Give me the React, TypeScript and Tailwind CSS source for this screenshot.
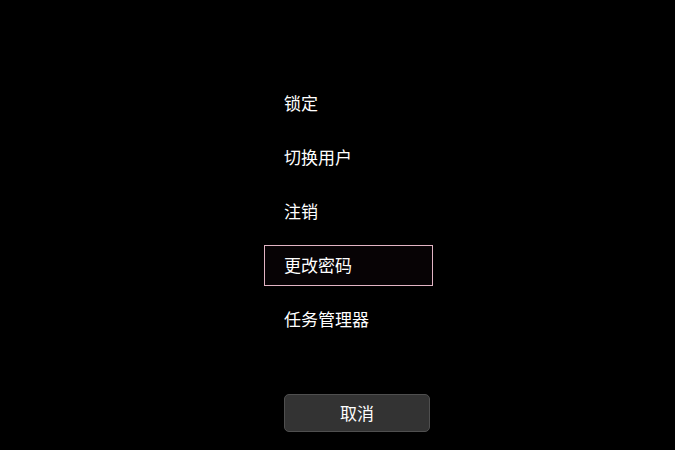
import React from "react";

const items = ["锁定", "切换用户", "注销", "更改密码", "任务管理器"];

export default function App() {
  return (
    <div
      className="w-[675px] h-[450px] bg-black text-white overflow-hidden"
      style={{ fontFamily: '"Noto Sans CJK SC", "Noto Sans", sans-serif' }}
    >
      <div className="flex flex-col pl-[264px] pt-[83px]">
        <div className="flex flex-col gap-[13px]">
          {items.map((t, i) => (
            <div
              key={t}
              className={
                i === 3
                  ? "w-[169px] h-[41px] flex items-center pl-[19px] pb-[2px] border border-[#e2b4c4] bg-[#070305] text-[17px] leading-none"
                  : "w-[169px] h-[41px] flex items-center pl-[20px] pb-[2px] text-[17px] leading-none"
              }
            >
              {t}
            </div>
          ))}
        </div>
        <div className="pl-[20px] pt-[54px]">
          <button className="w-[146px] h-[38px] rounded-[5px] bg-[#333333] border border-[#4f4f4f] text-white text-[17px] leading-none pb-[2px] flex items-center justify-center">
            取消
          </button>
        </div>
      </div>
    </div>
  );
}
